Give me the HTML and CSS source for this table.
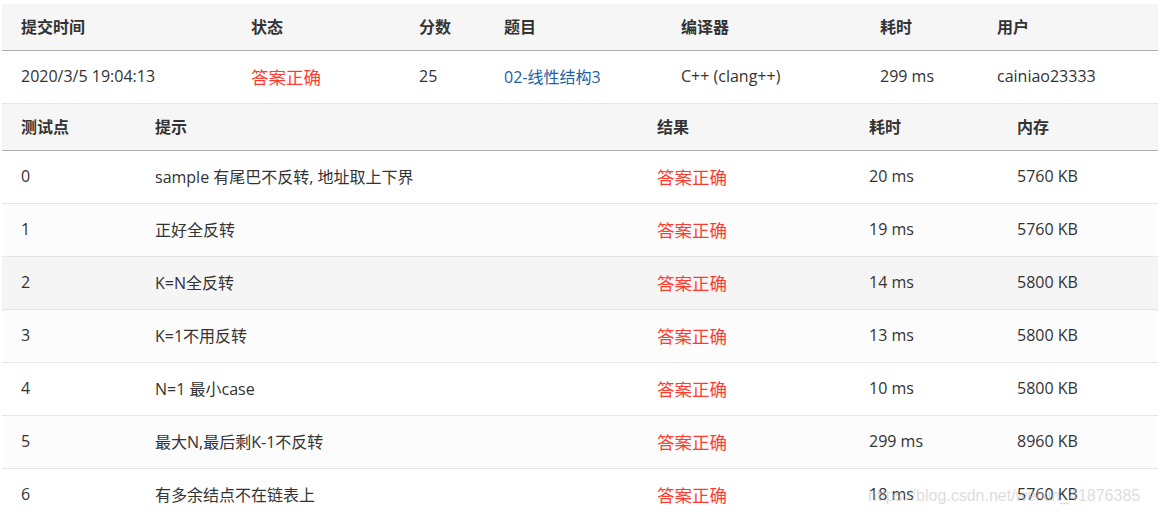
FILE: index.html
```html
<!DOCTYPE html>
<html lang="zh">
<head>
<meta charset="utf-8">
<link rel="stylesheet" href="styles.css">
</head>
<body>
<div class="page">
  <table class="grid summary">
    <colgroup>
      <col style="width:230px"><col style="width:168px"><col style="width:85px"><col style="width:177px"><col style="width:199px"><col style="width:117px"><col>
    </colgroup>
    <thead>
      <tr><th>提交时间</th><th>状态</th><th>分数</th><th>题目</th><th>编译器</th><th>耗时</th><th>用户</th></tr>
    </thead>
    <tbody>
      <tr>
        <td>2020/3/5 19:04:13</td>
        <td><span class="ok">答案正确</span></td>
        <td>25</td>
        <td><a class="link" href="#">02-线性结构3</a></td>
        <td>C++ (clang++)</td>
        <td>299 ms</td>
        <td>cainiao23333</td>
      </tr>
    </tbody>
  </table>
  <table class="grid cases">
    <colgroup>
      <col style="width:134px"><col style="width:502px"><col style="width:212px"><col style="width:148px"><col>
    </colgroup>
    <thead>
      <tr><th>测试点</th><th>提示</th><th>结果</th><th>耗时</th><th>内存</th></tr>
    </thead>
    <tbody>
      <tr><td>0</td><td>sample 有尾巴不反转, 地址取上下界</td><td><span class="ok">答案正确</span></td><td>20 ms</td><td>5760 KB</td></tr>
      <tr class="odd"><td>1</td><td>正好全反转</td><td><span class="ok">答案正确</span></td><td>19 ms</td><td>5760 KB</td></tr>
      <tr class="hover"><td>2</td><td>K=N全反转</td><td><span class="ok">答案正确</span></td><td>14 ms</td><td>5800 KB</td></tr>
      <tr class="odd"><td>3</td><td>K=1不用反转</td><td><span class="ok">答案正确</span></td><td>13 ms</td><td>5800 KB</td></tr>
      <tr><td>4</td><td>N=1 最小case</td><td><span class="ok">答案正确</span></td><td>10 ms</td><td>5800 KB</td></tr>
      <tr class="odd"><td>5</td><td>最大N,最后剩K-1不反转</td><td><span class="ok">答案正确</span></td><td>299 ms</td><td>8960 KB</td></tr>
      <tr><td>6</td><td>有多余结点不在链表上</td><td><span class="ok">答案正确</span></td><td>18 ms</td><td>5760 KB</td></tr>
    </tbody>
  </table>
  <div class="watermark">https://blog.csdn.net/weixin_41876385</div>
</div>
</body>
</html>
```
FILE: styles.css
```css
html, body {
  margin: 0;
  padding: 0;
  background: #fff;
}
body {
  font-family: "Open Sans", "Noto Sans CJK SC", sans-serif;
  font-size: 16px;
  color: #333;
  overflow: hidden;
}
.page {
  position: relative;
  padding: 4px 3px 0 2px;
  height: 516px;
}
.grid {
  width: 1156px;
  border-collapse: collapse;
  table-layout: fixed;
}
.grid th {
  background: #f6f6f6;
  height: 44px;
  padding: 0 0 2px 19px;
  text-align: left;
  font-weight: bold;
  color: #333;
  border-bottom: 1px solid #b0b0b0;
  white-space: nowrap;
}
.grid td {
  height: 50px;
  padding: 0 0 2px 19px;
  border-bottom: 1px solid #e6e6e6;
  white-space: nowrap;
  color: #333;
}
.grid tr.odd td {
  background: #fcfcfc;
}
.grid tr.hover td {
  background: #f5f5f5;
}
.ok {
  color: #ff3b30;
  font-size: 17.5px;
}
.link {
  color: #2160a8;
  text-decoration: none;
}
.watermark {
  position: absolute;
  left: 868px;
  top: 487px;
  font-family: "Liberation Sans", sans-serif;
  font-size: 16px;
  color: rgba(190, 190, 190, 0.55);
  pointer-events: none;
}
```
